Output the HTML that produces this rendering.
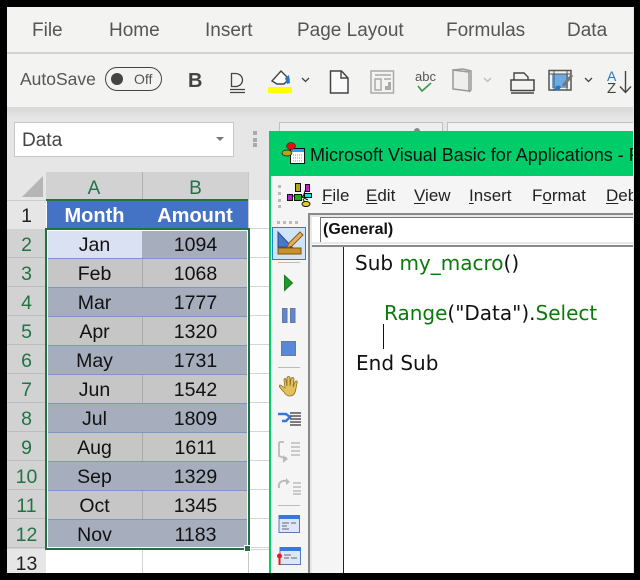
<!DOCTYPE html>
<html><head><meta charset="utf-8"><style>
html,body{margin:0;padding:0;background:#000;width:640px;height:580px;overflow:hidden}
#f{position:absolute;left:7px;top:7px;width:627px;height:566px;background:#e6e6e6;overflow:hidden}
.a{position:absolute}
.t{position:absolute;white-space:nowrap;font-family:"Liberation Sans",sans-serif;line-height:1}
.c{text-align:center}
.d{font-size:19.5px;color:#111}
.n{left:7px;width:39px;font-size:19.5px;color:#217346}
.m{left:47px;width:95px}
.v{left:143px;width:105px}
.g{font-family:"DejaVu Sans",sans-serif;font-size:20px;color:#111}
.g span{color:#0a7a0a}
.r{font-size:19px;color:#555;top:21px}
.e{font-size:17px;color:#222;top:187px}
svg{position:absolute;overflow:visible}
u{text-decoration-thickness:1px;text-underline-offset:2px}
</style></head><body>
<div class="a" style="left:0;top:0;width:640px;height:580px;background:#000"></div>
<div id="f"></div>
<div class="a" style="left:0;top:0;width:640px;height:580px;overflow:hidden;clip-path:inset(7px 7px 7px 7px)">
<!-- ribbon -->
<div class="a" style="left:7px;top:7px;width:627px;height:100px;background:#f3f3f2"></div>
<div class="a" style="left:7px;top:52px;width:627px;height:2px;background:#d3d3d2"></div>
<div class="a" style="left:7px;top:107px;width:627px;height:12px;background:linear-gradient(#d8d8d8,#e6e6e6)"></div>
<div class="t r" style="left:32px">File</div>
<div class="t r" style="left:109px">Home</div>
<div class="t r" style="left:205px">Insert</div>
<div class="t r" style="left:297px">Page Layout</div>
<div class="t r" style="left:446px">Formulas</div>
<div class="t r" style="left:567px">Data</div>
<div class="t" style="left:20px;top:71px;font-size:17.5px;color:#555">AutoSave</div>
<div class="a" style="left:105px;top:67px;width:55px;height:22px;border:1px solid #444;border-radius:12px"></div>
<div class="a" style="left:111px;top:73px;width:12px;height:12px;border-radius:50%;background:#444"></div>
<div class="t" style="left:134px;top:72px;font-size:14px;color:#555">Off</div>
<div class="t" style="left:188px;top:71px;font-size:20px;font-weight:bold;color:#444">B</div>
<svg style="left:0;top:0" width="640" height="120" viewBox="0 0 640 120" fill="none">
 <path d="M231.500 73.500h4a7 6.500 0 0 1 0 13h-4z" stroke="#444" stroke-width="1.300"/>
 <path d="M230 89.500h15M230 92.500h15" stroke="#444" stroke-width="1.200"/>
 <path d="M272 81l9-10 8 8-5 5h-7z" stroke="#444" stroke-width="1.400" fill="#fff"/>
 <path d="M285 78l4-3 1 8-3 1z" fill="#2a76c0"/>
 <rect x="268" y="87" width="24" height="6" fill="#ffff00"/>
 <path d="M302 78l3.500 3.500 3.500-3.500" stroke="#444" stroke-width="1.300"/>
 <path d="M330.500 71h11l6.500 7v15h-17.500z" stroke="#444" stroke-width="1.500" fill="#fafafa"/>
 <path d="M341 71v7h7" stroke="#444" stroke-width="1.400"/>
 <rect x="371" y="71" width="22.500" height="22" stroke="#aaa" stroke-width="1.500"/>
 <path d="M375 75h16M375 79h6v11h-6zM384 79h7" stroke="#aaa" stroke-width="1.500"/>
 <path d="M385 90v-4h3v4zM388 90v-8h3v8z" fill="#aaa"/>
 <path d="M418 86l4 5 9-8" stroke="#3f9a4f" stroke-width="1.700"/>
 <path d="M453 70l16 2v19l-16-2z" fill="#eee" stroke="#999" stroke-width="1.500"/>
 <path d="M453 70l10-1 8 2v19l-2 2" stroke="#999" stroke-width="1.500"/>
 <path d="M484 78l3.500 3.500 3.500-3.500" stroke="#bbb" stroke-width="1.300"/>
 <rect x="511" y="80" width="23" height="10.500" stroke="#444" stroke-width="1.500"/>
 <path d="M514 80v-7h10l4 4v3" stroke="#444" stroke-width="1.400"/>
 <path d="M511 93h23" stroke="#444" stroke-width="1.500"/>
 <rect x="549" y="70.500" width="22" height="19.500" stroke="#555" stroke-width="1.500" fill="#f3f3f2"/>
 <rect x="552" y="74" width="16" height="14" fill="#6ea9e2"/>
 <path d="M554 70v20M567 70v20M549 74h22" stroke="#555" stroke-width="1"/>
 <path d="M572 75l-9 11" stroke="#777" stroke-width="3"/>
 <path d="M556 86c3-1 5 0 5 1-1 3-5 4-8 4 2-1 2-3 3-5z" fill="#2a76c0"/>
 <path d="M585 78l3.500 3.500 3.500-3.500" stroke="#444" stroke-width="1.300"/>
 <path d="M625.500 71v21M620 86.500l5.500 6 5.500-6" stroke="#444" stroke-width="1.400"/>
</svg>
<div class="t" style="left:415px;top:70px;font-size:13px;color:#555">abc</div>
<div class="t" style="left:607px;top:69px;font-size:14px;color:#2a76c0">A</div>
<div class="t" style="left:607px;top:81px;font-size:15px;color:#444">Z</div>
<!-- name box -->
<div class="a" style="left:14px;top:122px;width:218px;height:33px;background:#fff;border:1px solid #c6c6c6"></div>
<div class="t" style="left:22px;top:131px;font-size:19px;color:#444">Data</div>
<div class="a" style="left:216px;top:137px;border-left:4px solid transparent;border-right:4px solid transparent;border-top:4px solid #777"></div>
<div class="a" style="left:253px;top:131px;width:4px;height:4px;background:#aaa;box-shadow:0 7px 0 #aaa,0 12px 0 #aaa"></div>
<!-- formula boxes -->
<div class="a" style="left:279px;top:122px;width:162px;height:40px;background:#eeeeee;border:1px solid #c0c0c0"></div>
<div class="a" style="left:447px;top:122px;width:200px;height:40px;background:#f2f2f2;border:1px solid #c0c0c0"></div>
<div class="a" style="left:414px;top:128px;width:6px;height:4px;border-radius:3px 3px 0 0;background:#888"></div>
<!-- sheet -->
<div class="a" style="left:7px;top:172px;width:241px;height:28px;background:#d2d2d2"></div>
<div class="a" style="left:7px;top:172px;width:39px;height:28px;background:#e6e6e6"></div>
<svg style="left:0;top:0" width="60" height="200"><path d="M22 197L43 176v21z" fill="#b5b5b5"/></svg>
<div class="a" style="left:142px;top:172px;width:1px;height:28px;background:#b0b0b0"></div>
<div class="t c" style="left:46px;width:96px;top:179px;font-size:19px;color:#217346">A</div>
<div class="t c" style="left:143px;width:105px;top:179px;font-size:19px;color:#217346">B</div>
<div class="a" style="left:7px;top:200px;width:39px;height:373px;background:#e6e6e6"></div>
<div class="a" style="left:7px;top:229px;width:39px;height:320px;background:repeating-linear-gradient(#d2d2d2 0,#d2d2d2 28px,#bdbdbd 28px,#bdbdbd 29px)"></div>
<div class="a" style="left:46px;top:200px;width:223px;height:373px;background:#fff"></div>
<div class="a" style="left:46px;top:199px;width:202px;height:2px;background:#217346"></div>
<div class="a" style="left:47px;top:201px;width:201px;height:27px;background:#4472c4"></div>
<div class="t c" style="left:47px;width:95px;top:206px;font-size:20px;font-weight:bold;color:#fff">Month</div>
<div class="t c" style="left:142px;width:106px;top:206px;font-size:20px;font-weight:bold;color:#fff">Amount</div>
<div class="a" style="left:249px;top:200px;width:20px;height:373px;background:repeating-linear-gradient(#fff 0,#fff 28px,#d4d4d4 28px,#d4d4d4 29px)"></div>
<div class="a" style="left:248px;top:172px;width:21px;height:28px;background:#e6e6e6"></div>
<div class="a" style="left:248px;top:172px;width:1px;height:401px;background:#c8c8c8"></div>
<div class="a" style="left:7px;top:200px;width:39px;height:1px;background:#ccc"></div>
<div class="a" style="left:46px;top:549px;width:223px;height:1px;background:#d4d4d4"></div>
<div class="a" style="left:142px;top:550px;width:1px;height:23px;background:#d4d4d4"></div>
<!-- data rows -->
<div class="a" style="left:47px;top:230px;width:95px;height:28px;background:#dae1f3"></div>
<div class="a" style="left:142px;top:230px;width:105px;height:28px;background:#a6adbc"></div>
<div class="a" style="left:47px;top:258px;width:200px;height:1px;background:#7e95c4"></div>
<div class="a" style="left:47px;top:259px;width:200px;height:28px;background:#c6c6c6"></div><div class="a" style="left:142px;top:259px;width:1px;height:28px;background:#aaa"></div>
<div class="a" style="left:47px;top:287px;width:200px;height:1px;background:#7e95c4"></div>
<div class="a" style="left:47px;top:288px;width:200px;height:28px;background:#a6adbc"></div>
<div class="a" style="left:47px;top:316px;width:200px;height:1px;background:#7e95c4"></div>
<div class="a" style="left:47px;top:317px;width:200px;height:28px;background:#c6c6c6"></div><div class="a" style="left:142px;top:317px;width:1px;height:28px;background:#aaa"></div>
<div class="a" style="left:47px;top:345px;width:200px;height:1px;background:#7e95c4"></div>
<div class="a" style="left:47px;top:346px;width:200px;height:28px;background:#a6adbc"></div>
<div class="a" style="left:47px;top:374px;width:200px;height:1px;background:#7e95c4"></div>
<div class="a" style="left:47px;top:375px;width:200px;height:28px;background:#c6c6c6"></div><div class="a" style="left:142px;top:375px;width:1px;height:28px;background:#aaa"></div>
<div class="a" style="left:47px;top:403px;width:200px;height:1px;background:#7e95c4"></div>
<div class="a" style="left:47px;top:404px;width:200px;height:28px;background:#a6adbc"></div>
<div class="a" style="left:47px;top:432px;width:200px;height:1px;background:#7e95c4"></div>
<div class="a" style="left:47px;top:433px;width:200px;height:28px;background:#c6c6c6"></div><div class="a" style="left:142px;top:433px;width:1px;height:28px;background:#aaa"></div>
<div class="a" style="left:47px;top:461px;width:200px;height:1px;background:#7e95c4"></div>
<div class="a" style="left:47px;top:462px;width:200px;height:28px;background:#a6adbc"></div>
<div class="a" style="left:47px;top:490px;width:200px;height:1px;background:#7e95c4"></div>
<div class="a" style="left:47px;top:491px;width:200px;height:28px;background:#c6c6c6"></div><div class="a" style="left:142px;top:491px;width:1px;height:28px;background:#aaa"></div>
<div class="a" style="left:47px;top:519px;width:200px;height:1px;background:#7e95c4"></div>
<div class="a" style="left:47px;top:520px;width:200px;height:27px;background:#a6adbc"></div>
<!-- row numbers -->
<div class="t c n" style="top:207px;color:#222">1</div>
<div class="t c n" style="top:236px">2</div>
<div class="t c n" style="top:265px">3</div>
<div class="t c n" style="top:294px">4</div>
<div class="t c n" style="top:323px">5</div>
<div class="t c n" style="top:352px">6</div>
<div class="t c n" style="top:381px">7</div>
<div class="t c n" style="top:410px">8</div>
<div class="t c n" style="top:439px">9</div>
<div class="t c n" style="top:468px">10</div>
<div class="t c n" style="top:497px">11</div>
<div class="t c n" style="top:526px">12</div>
<div class="t c n" style="top:555px;color:#222">13</div>
<!-- cell text -->
<div class="t c d m" style="top:236px">Jan</div><div class="t c d v" style="top:236px">1094</div>
<div class="t c d m" style="top:265px">Feb</div><div class="t c d v" style="top:265px">1068</div>
<div class="t c d m" style="top:294px">Mar</div><div class="t c d v" style="top:294px">1777</div>
<div class="t c d m" style="top:323px">Apr</div><div class="t c d v" style="top:323px">1320</div>
<div class="t c d m" style="top:352px">May</div><div class="t c d v" style="top:352px">1731</div>
<div class="t c d m" style="top:381px">Jun</div><div class="t c d v" style="top:381px">1542</div>
<div class="t c d m" style="top:410px">Jul</div><div class="t c d v" style="top:410px">1809</div>
<div class="t c d m" style="top:439px">Aug</div><div class="t c d v" style="top:439px">1611</div>
<div class="t c d m" style="top:468px">Sep</div><div class="t c d v" style="top:468px">1329</div>
<div class="t c d m" style="top:497px">Oct</div><div class="t c d v" style="top:497px">1345</div>
<div class="t c d m" style="top:526px">Nov</div><div class="t c d v" style="top:526px">1183</div>
<!-- selection -->
<div class="a" style="left:45px;top:228px;width:201px;height:318px;border:2px solid #217346;outline:1px solid #fff;outline-offset:-3px"></div>
<div class="a" style="left:244px;top:545px;width:7px;height:7px;background:#217346;border:1px solid #fff;box-sizing:border-box"></div>
<!-- VBA window -->
<div class="a" style="left:269px;top:131px;width:365px;height:442px;background:#f5f5f5;border-left:1px solid #00cc6a;box-sizing:border-box"></div>
<div class="a" style="left:269px;top:131px;width:365px;height:45px;background:#00cc6a"></div>
<div class="a" style="left:270px;top:176px;width:1px;height:397px;background:#00cc6a"></div>
<svg style="left:0;top:0" width="640" height="580" viewBox="0 0 640 580" fill="none">
 <!-- title icon -->
 <rect x="290.500" y="148.500" width="14" height="15" fill="#fff" stroke="#111"/>
 <rect x="291" y="149" width="13" height="3" fill="#1aa9e8"/>
 <path d="M293 155h10M293 158h10M293 161h10" stroke="#999" stroke-dasharray="1 1"/>
 <ellipse cx="291" cy="146" rx="4.500" ry="3.500" fill="#e01010" stroke="#111" stroke-width=".5"/>
 <ellipse cx="287" cy="153" rx="5" ry="3" fill="#b5a51a" stroke="#111" stroke-width=".7"/>
 <!-- menu icon -->
 <path d="M300 196l8 4M306 188l-3 9M290 196h13M303 199l3 6" stroke="#111" stroke-width="1"/>
 <rect x="295.500" y="183.500" width="5" height="8" fill="#b5a51a" stroke="#111"/>
 <rect x="305.500" y="184.500" width="4" height="7" fill="#c81fc8" stroke="#111"/>
 <rect x="287.500" y="194.500" width="5" height="6" fill="#c81fc8" stroke="#111"/>
 <rect x="294.500" y="194.500" width="7" height="6" fill="#11b511" stroke="#111"/>
 <rect x="304.500" y="193.500" width="7" height="4" fill="#22dddd" stroke="#111"/>
 <ellipse cx="306" cy="204" rx="4" ry="2.500" fill="#e0d020" stroke="#111"/>
 <!-- design mode -->
 <rect x="272.500" y="227.500" width="33" height="32" fill="#cfe4f7" stroke="#1b85d8"/>
 <path d="M278 232v15h14z" fill="#4a78c8" stroke="#2a4a99"/>
 <path d="M300 232l3 3-11 11-5 2 2-5z" fill="#e4b060" stroke="#8a5a20"/>
 <rect x="278" y="248" width="23" height="6" fill="#c9912c" stroke="#7a5510"/>
 <!-- run etc -->
 <path d="M284.500 275.500l8 7.500-8 7.500z" fill="#1e9a2c" stroke="#177a22"/>
 <path d="M278 262.500h22M278 367.500h22M278 505.500h22" stroke="#bbb"/>
 <rect x="282.500" y="308.500" width="4.500" height="14" fill="#5a88d8" stroke="#6a7a9a"/>
 <rect x="290.500" y="308.500" width="4.500" height="14" fill="#5a88d8" stroke="#6a7a9a"/>
 <rect x="281.500" y="341.500" width="14" height="14" fill="#5a88d8" stroke="#6a7a9a"/>
 <path d="M284 392c-3-3-6-6-4-7 2 0 4 3 5 3l-1-8c0-2 2-2 2 0l1 6v-8c0-2 3-2 3 0v8l1-7c0-2 3-2 3 0l-1 8 2-5c1-2 3-1 2 1-1 4-1 10-4 12-3 2-7 1-9-3z" fill="#e3c05a" stroke="#8a7020" stroke-width=".8"/>
 <path d="M278 414h8l4 3-4 4h-4" stroke="#3a78d8" stroke-width="2.500"/>
 <path d="M290 413h11M290 416h11M290 419h11M290 422h11M290 425h11" stroke="#555" stroke-width="1.500"/>
 <path d="M279 442h5M279 442v14l5 2h3" stroke="#bbb" stroke-width="1.800"/>
 <path d="M283 463l5-4-5-4z" fill="#bbb"/>
 <path d="M291 443h9M291 447h9M291 451h9M291 455h9" stroke="#bbb" stroke-width="1.500"/>
 <path d="M279 488c-1-6 3-8 8-7" stroke="#bbb" stroke-width="2"/>
 <path d="M286 485l4-3-4-4z" fill="#bbb"/>
 <path d="M293 483h8M293 487h8M293 491h8M293 494h8" stroke="#bbb" stroke-width="1.500"/>
 <rect x="279" y="515.500" width="20.500" height="17" fill="#dde7f6" stroke="#5a7ab8"/>
 <rect x="279" y="515" width="21" height="4" fill="#3a78d8"/>
 <path d="M282 523h7M282 526h5M282 529h7M291 523h5" stroke="#667" stroke-width="1"/>
 <rect x="280" y="547.500" width="20.500" height="17" fill="#dde7f6" stroke="#5a7ab8"/>
 <rect x="280" y="547" width="21" height="4" fill="#3a78d8"/>
 <path d="M284 555h7M284 558h5M291 558h6" stroke="#667" stroke-width="1"/>
 <circle cx="279.500" cy="556" r="2.500" fill="#e02020"/>
 <path d="M279.500 558v7" stroke="#e02020" stroke-width="2"/>
</svg>
<div class="a" style="left:278px;top:185px;width:3px;height:3px;background:#bbb"></div>
<div class="a" style="left:278px;top:192px;width:3px;height:3px;background:#bbb"></div>
<div class="a" style="left:278px;top:199px;width:3px;height:3px;background:#bbb"></div>
<div class="a" style="left:278px;top:205px;width:3px;height:3px;background:#bbb"></div>
<div class="a" style="left:277px;top:221px;width:22px;height:3px;background:repeating-linear-gradient(90deg,#bbb 0,#bbb 3px,transparent 3px,transparent 6px)"></div>
<div class="t" style="left:310px;top:146px;font-size:18px;color:#111">Microsoft Visual Basic for Applications - F</div>
<div class="t e" style="left:322px"><u>F</u>ile</div>
<div class="t e" style="left:366px"><u>E</u>dit</div>
<div class="t e" style="left:414px"><u>V</u>iew</div>
<div class="t e" style="left:469px"><u>I</u>nsert</div>
<div class="t e" style="left:532px">F<u>o</u>rmat</div>
<div class="t e" style="left:606px"><u>D</u>ebug</div>
<!-- code area -->
<div class="a" style="left:308px;top:213px;width:326px;height:360px;background:#fff"></div>
<div class="a" style="left:308px;top:213px;width:326px;height:2px;background:#8a8a8a"></div>
<div class="a" style="left:308px;top:215px;width:326px;height:2px;background:#e8e8e8"></div>
<div class="a" style="left:308px;top:213px;width:2px;height:360px;background:#8a8a8a"></div>
<div class="a" style="left:310px;top:215px;width:2px;height:358px;background:#e8e8e8"></div>
<div class="a" style="left:320px;top:217px;width:314px;height:1px;background:#777"></div>
<div class="a" style="left:320px;top:217px;width:1px;height:26px;background:#777"></div>
<div class="a" style="left:312px;top:242px;width:322px;height:2px;background:#e8e8e8"></div>
<div class="a" style="left:312px;top:245px;width:322px;height:2px;background:#8a8a8a"></div>
<div class="a" style="left:312px;top:247px;width:31px;height:326px;background:#f5f5f5"></div>
<div class="a" style="left:343px;top:247px;width:1px;height:326px;background:#222"></div>
<div class="t" style="left:323px;top:222px;font-size:16px;font-weight:bold;color:#111">(General)</div>
<div class="t g" style="left:355px;top:253px">Sub <span>my_macro</span>()</div>
<div class="t g" style="left:384px;top:303px"><span>Range</span>("Data").<span>Select</span></div>
<div class="a" style="left:383px;top:324px;width:1px;height:25px;background:#111"></div>
<div class="t g" style="left:356px;top:353px">End Sub</div>
</div>
</body></html>
